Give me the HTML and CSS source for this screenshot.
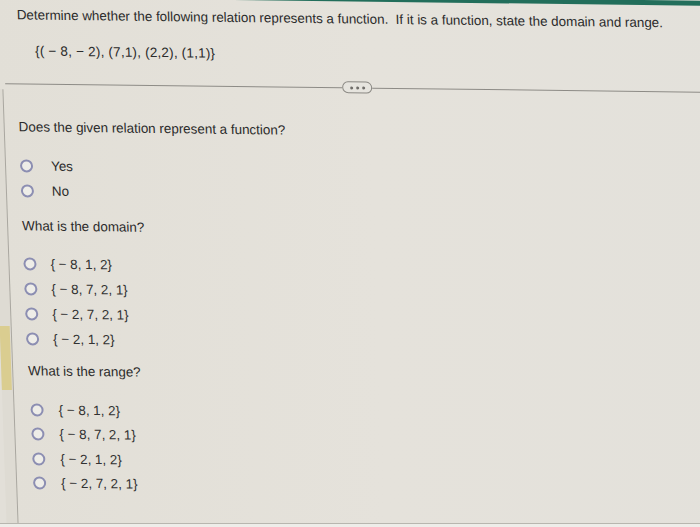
FILE: index.html
```html
<!DOCTYPE html>
<html lang="en">
<head>
<meta charset="utf-8">
<title>Relation question</title>
<link rel="stylesheet" href="styles.css">
</head>
<body>
<div class="panel">
  <div class="sheet">
    <div class="topbar"></div>
    <header class="prompt">
      <p class="lead">Determine whether the following relation represents a function.&nbsp; If it is a function, state the domain and range.</p>
      <p class="set">{( − 8, − 2), (7,1), (2,2), (1,1)}</p>
    </header>
    <div class="divider">
      <span class="rule"></span>
      <span class="more"><i></i><i></i><i></i></span>
      <span class="rule"></span>
    </div>
    <div class="work">
      <div class="gutter"><span class="marker"></span></div>
      <div class="content">
        <p class="q q-func">Does the given relation represent a function?</p>
        <ul class="opts opts-yn">
          <li><span class="radio"></span>Yes</li>
          <li><span class="radio"></span>No</li>
        </ul>
        <p class="q q-dom">What is the domain?</p>
        <ul class="opts opts-set opts-dom">
          <li><span class="radio"></span>{ − 8, 1, 2}</li>
          <li><span class="radio"></span>{ − 8, 7, 2, 1}</li>
          <li><span class="radio"></span>{ − 2, 7, 2, 1}</li>
          <li><span class="radio"></span>{ − 2, 1, 2}</li>
        </ul>
        <p class="q q-rng">What is the range?</p>
        <ul class="opts opts-set opts-rng">
          <li><span class="radio"></span>{ − 8, 1, 2}</li>
          <li><span class="radio"></span>{ − 8, 7, 2, 1}</li>
          <li><span class="radio"></span>{ − 2, 1, 2}</li>
          <li><span class="radio"></span>{ − 2, 7, 2, 1}</li>
        </ul>
      </div>
    </div>
  </div>
</div>
</body>
</html>
```

FILE: styles.css
```css
html, body {
  margin: 0;
  padding: 0;
}
body {
  background: #eeede9;
  font-family: "Liberation Sans", Arial, sans-serif;
  color: #2b2b2b;
  width: 700px;
  height: 527px;
  overflow: hidden;
}
.panel {
  height: 523px;
  overflow: hidden;
  background: #e2dfd8;
  border-bottom: 1px solid #b8b6af;
}
.sheet {
  width: 760px;
  height: 560px;
  margin-top: -8px;
  margin-left: -12px;
  transform: skew(2deg, 0.7deg);
  transform-origin: 0 0;
  background: linear-gradient(to right, #e2dfd7 0%, #e5e2db 50%, #e3e1db 100%);
  display: flex;
  flex-direction: column;
}
.topbar {
  height: 5px;
  background: #226e5b;
  flex: none;
}
.prompt {
  padding: 10px 0 0 28px;
}
.prompt p {
  margin: 0;
  line-height: 16px;
  font-size: 13.4px;
}
.set {
  margin-top: 20px !important;
  padding-left: 17px;
  font-size: 13.5px !important;
  letter-spacing: 0.2px;
}
.divider {
  display: flex;
  align-items: center;
  height: 12px;
  margin-top: 18px;
  padding-left: 14px;
}
.rule {
  height: 1px;
  background: #8d8b86;
}
.rule:first-child {
  width: 337px;
}
.rule:last-child {
  flex: 1;
}
.more {
  width: 28px;
  height: 10px;
  border: 1px solid #8a8883;
  border-radius: 6px;
  display: flex;
  align-items: center;
  justify-content: center;
  gap: 3px;
  background: #e6e4de;
}
.more i {
  width: 3px;
  height: 3px;
  border-radius: 50%;
  background: #6f6d69;
}
.work {
  display: grid;
  grid-template-columns: 11px 1fr;
  flex: 1;
}
.gutter {
  background: #dedbd3;
}
.marker {
  display: block;
  width: 10px;
  height: 64px;
  margin-top: 237px;
  background: #dacd90;
}
.content {
  border-left: 1px solid #a9a7a0;
  padding-left: 14px;
  padding-top: 30px;
}
.q {
  margin: 0;
  font-size: 13.4px;
  line-height: 16px;
}
.q-dom {
  margin-top: 14px;
}
.q-rng {
  margin-top: 13px;
  padding-left: 1px;
}
.opts {
  list-style: none;
  margin: 0;
  padding: 0;
}
.opts li {
  display: flex;
  align-items: center;
  font-size: 13.4px;
}
.opts-yn {
  margin-top: 18px;
}
.opts-yn li {
  height: 25.3px;
  gap: 18px;
}
.opts-set li {
  font-size: 13.4px;
  gap: 14px;
  color: #323232;
}
.opts-dom {
  margin-top: 18px;
}
.opts-dom li {
  height: 24.7px;
}
.opts-rng {
  margin-top: 18px;
  padding-left: 2px;
}
.opts-rng li {
  height: 24.3px;
  gap: 15px;
}
.radio {
  flex: none;
  width: 9px;
  height: 9px;
  border: 2px solid #8c8eb2;
  border-radius: 50%;
  background: #eeede8;
}
```
